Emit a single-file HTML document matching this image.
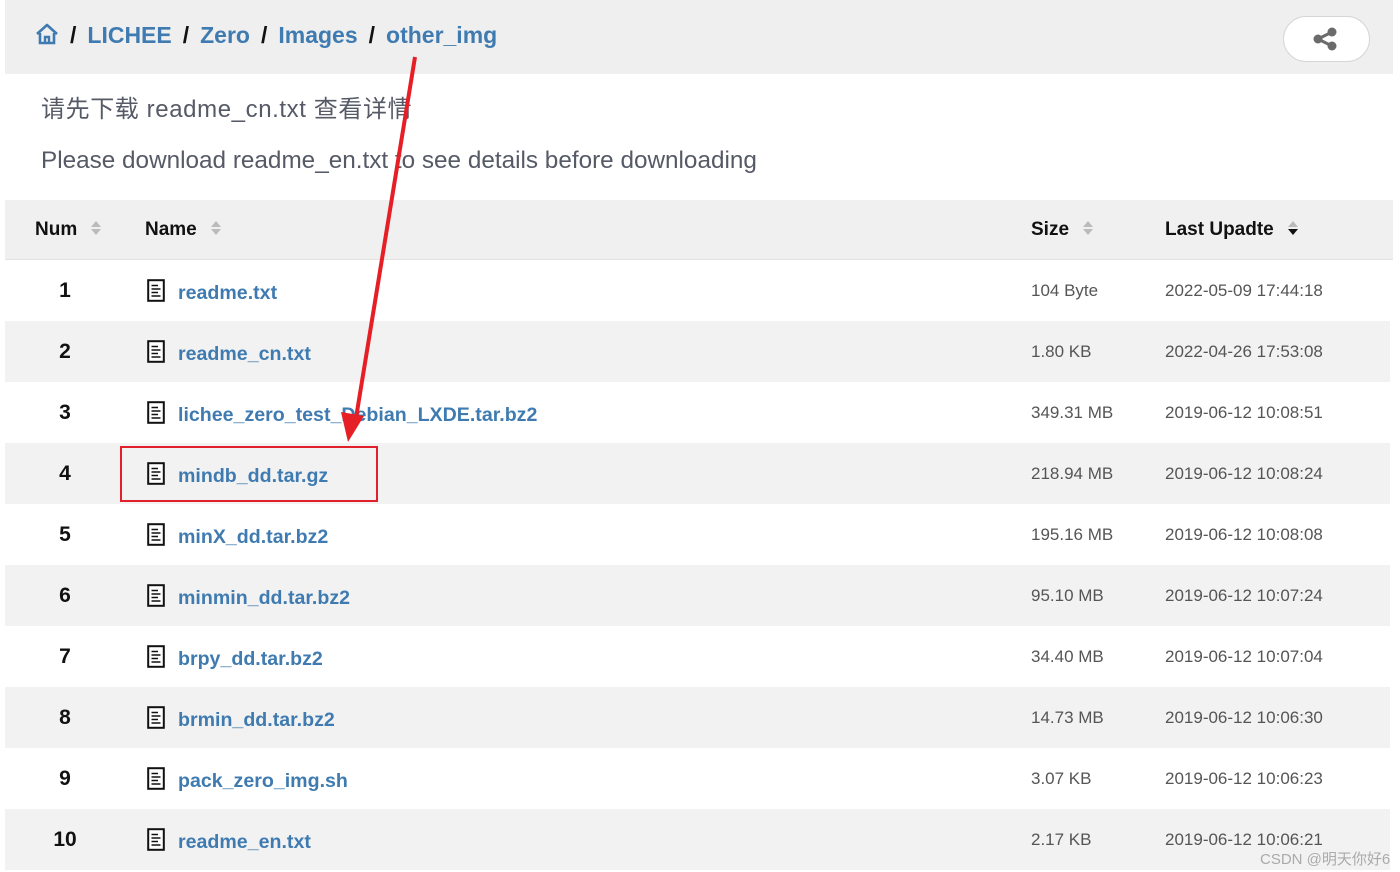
<!DOCTYPE html>
<html><head><meta charset="utf-8"><style>
body{margin:0;width:1400px;height:872px;background:#fff;position:relative;overflow:hidden;font-family:"Liberation Sans","Noto Sans CJK SC",sans-serif}
.bar{position:absolute;left:5px;top:0;width:1388px;height:74px;background:#efefef}
.bc{position:absolute;left:35px;top:22px;font-size:23px;font-weight:bold;color:#3f7bb0;white-space:nowrap}
.bc i{font-style:normal;color:#111;margin:0 11px}
.share{position:absolute;left:1283px;top:16px;width:85px;height:44px;border:1px solid #d6d6d6;border-radius:23px;background:#fff}
.t{position:absolute;color:#555a66;font-size:24.3px;white-space:nowrap}
.hd{position:absolute;left:5px;top:200px;width:1388px;height:59px;background:#f0f0f0;border-bottom:1px solid #e2e2e2}
.h{position:absolute;top:219px;font-size:19px;font-weight:bold;color:#111}
.s{display:inline-block;vertical-align:middle;margin-left:13px;width:12px;height:16px;position:relative;top:-2px}
.row{position:absolute;left:5px;width:1385px;height:61px}
.g{background:#f2f2f2}
.n{position:absolute;width:120px;left:5px;text-align:center;font-size:21px;font-weight:bold;color:#111}
.nm{position:absolute;left:178px;font-size:19.6px;font-weight:bold;color:#3f7bb0;white-space:nowrap}
.ic{position:absolute;left:147px;width:18px;height:23px}
.sz,.dt{position:absolute;font-size:17px;color:#555;white-space:nowrap}
.sz{left:1031px}.dt{left:1165px}
</style></head><body>
<div class="bar"></div>
<div class="bc"><svg width="24" height="22" viewBox="0 0 24 22" style="vertical-align:-2px"><path d="M2 11 L12 2 L22 11" fill="none" stroke="#3f7bb0" stroke-width="2.6" stroke-linejoin="round"/><path d="M5 10 V20 H19 V10" fill="none" stroke="#3f7bb0" stroke-width="2.6"/><path d="M10 20 V14 H14 V20" fill="none" stroke="#3f7bb0" stroke-width="2.4"/></svg><i>/</i>LICHEE<i>/</i>Zero<i>/</i>Images<i>/</i>other_img</div>
<div class="share"><svg width="85" height="44" viewBox="0 0 85 44"><g fill="#6b6b6b"><circle cx="48" cy="15" r="4.5"/><circle cx="34" cy="22" r="4.5"/><circle cx="48" cy="29" r="4.5"/></g><path d="M48 15 L34 22 L48 29" stroke="#6b6b6b" stroke-width="3" fill="none"/></svg></div>
<div class="t" style="left:41px;top:89px;font-size:24px;letter-spacing:0.6px">请先下载 readme_cn.txt 查看详情</div>
<div class="t" style="left:41px;top:147px">Please download readme_en.txt to see details before downloading</div>
<div class="hd"></div>
<svg width="0" height="0" style="position:absolute"><defs><g id="sg"><path d="M1 7 L6 1 L11 7Z" fill="#bbb"/><path d="M1 9 L6 15 L11 9Z" fill="#bbb"/></g><g id="doc"><rect x="1.2" y="1.2" width="15.6" height="20.6" fill="#fff" stroke="#111" stroke-width="2"/><path d="M4.5 6.5H11M4.5 10H13.5M4.5 13.5H11M4.5 17H13.5" stroke="#111" stroke-width="1.6"/></g></defs></svg>
<div class="h" style="left:35px">Num<svg class="s" viewBox="0 0 12 16"><use href="#sg"/></svg></div>
<div class="h" style="left:145px">Name<svg class="s" viewBox="0 0 12 16"><use href="#sg"/></svg></div>
<div class="h" style="left:1031px">Size<svg class="s" viewBox="0 0 12 16"><use href="#sg"/></svg></div>
<div class="h" style="left:1165px">Last Upadte<svg class="s" viewBox="0 0 12 16"><path d="M1 7 L6 1 L11 7Z" fill="#bbb"/><path d="M1 9 L6 15 L11 9Z" fill="#111"/></svg></div>

<div class="row" style="top:260px"></div><div class="row g" style="top:321px"></div><div class="row" style="top:382px"></div><div class="row g" style="top:443px"></div><div class="row" style="top:504px"></div><div class="row g" style="top:565px"></div><div class="row" style="top:626px"></div><div class="row g" style="top:687px"></div><div class="row" style="top:748px"></div><div class="row g" style="top:809px"></div>

<div class="n" style="top:279px">1</div><svg class="ic" style="top:279px" viewBox="0 0 18 23"><use href="#doc"/></svg><div class="nm" style="top:282px">readme.txt</div><div class="sz" style="top:281px">104 Byte</div><div class="dt" style="top:281px">2022-05-09 17:44:18</div>
<div class="n" style="top:340px">2</div><svg class="ic" style="top:340px" viewBox="0 0 18 23"><use href="#doc"/></svg><div class="nm" style="top:343px">readme_cn.txt</div><div class="sz" style="top:342px">1.80 KB</div><div class="dt" style="top:342px">2022-04-26 17:53:08</div>
<div class="n" style="top:401px">3</div><svg class="ic" style="top:401px" viewBox="0 0 18 23"><use href="#doc"/></svg><div class="nm" style="top:404px">lichee_zero_test_Debian_LXDE.tar.bz2</div><div class="sz" style="top:403px">349.31 MB</div><div class="dt" style="top:403px">2019-06-12 10:08:51</div>
<div class="n" style="top:462px">4</div><svg class="ic" style="top:462px" viewBox="0 0 18 23"><use href="#doc"/></svg><div class="nm" style="top:465px">mindb_dd.tar.gz</div><div class="sz" style="top:464px">218.94 MB</div><div class="dt" style="top:464px">2019-06-12 10:08:24</div>
<div class="n" style="top:523px">5</div><svg class="ic" style="top:523px" viewBox="0 0 18 23"><use href="#doc"/></svg><div class="nm" style="top:526px">minX_dd.tar.bz2</div><div class="sz" style="top:525px">195.16 MB</div><div class="dt" style="top:525px">2019-06-12 10:08:08</div>
<div class="n" style="top:584px">6</div><svg class="ic" style="top:584px" viewBox="0 0 18 23"><use href="#doc"/></svg><div class="nm" style="top:587px">minmin_dd.tar.bz2</div><div class="sz" style="top:586px">95.10 MB</div><div class="dt" style="top:586px">2019-06-12 10:07:24</div>
<div class="n" style="top:645px">7</div><svg class="ic" style="top:645px" viewBox="0 0 18 23"><use href="#doc"/></svg><div class="nm" style="top:648px">brpy_dd.tar.bz2</div><div class="sz" style="top:647px">34.40 MB</div><div class="dt" style="top:647px">2019-06-12 10:07:04</div>
<div class="n" style="top:706px">8</div><svg class="ic" style="top:706px" viewBox="0 0 18 23"><use href="#doc"/></svg><div class="nm" style="top:709px">brmin_dd.tar.bz2</div><div class="sz" style="top:708px">14.73 MB</div><div class="dt" style="top:708px">2019-06-12 10:06:30</div>
<div class="n" style="top:767px">9</div><svg class="ic" style="top:767px" viewBox="0 0 18 23"><use href="#doc"/></svg><div class="nm" style="top:770px">pack_zero_img.sh</div><div class="sz" style="top:769px">3.07 KB</div><div class="dt" style="top:769px">2019-06-12 10:06:23</div>
<div class="n" style="top:828px">10</div><svg class="ic" style="top:828px" viewBox="0 0 18 23"><use href="#doc"/></svg><div class="nm" style="top:831px">readme_en.txt</div><div class="sz" style="top:830px">2.17 KB</div><div class="dt" style="top:830px">2019-06-12 10:06:21</div>
<div style="position:absolute;left:1260px;top:848px;font-size:15px;color:#aaa">CSDN @明天你好6</div>

<div style="position:absolute;left:120px;top:446px;width:254px;height:52px;border:2px solid #e0202a"></div>
<svg style="position:absolute;left:0;top:0" width="1400" height="872"><path d="M415 57 L356 418" stroke="#e61e25" stroke-width="4" fill="none"/><path d="M341 412 L348 442 L364 416Z" fill="#e61e25"/></svg>
</body></html>
